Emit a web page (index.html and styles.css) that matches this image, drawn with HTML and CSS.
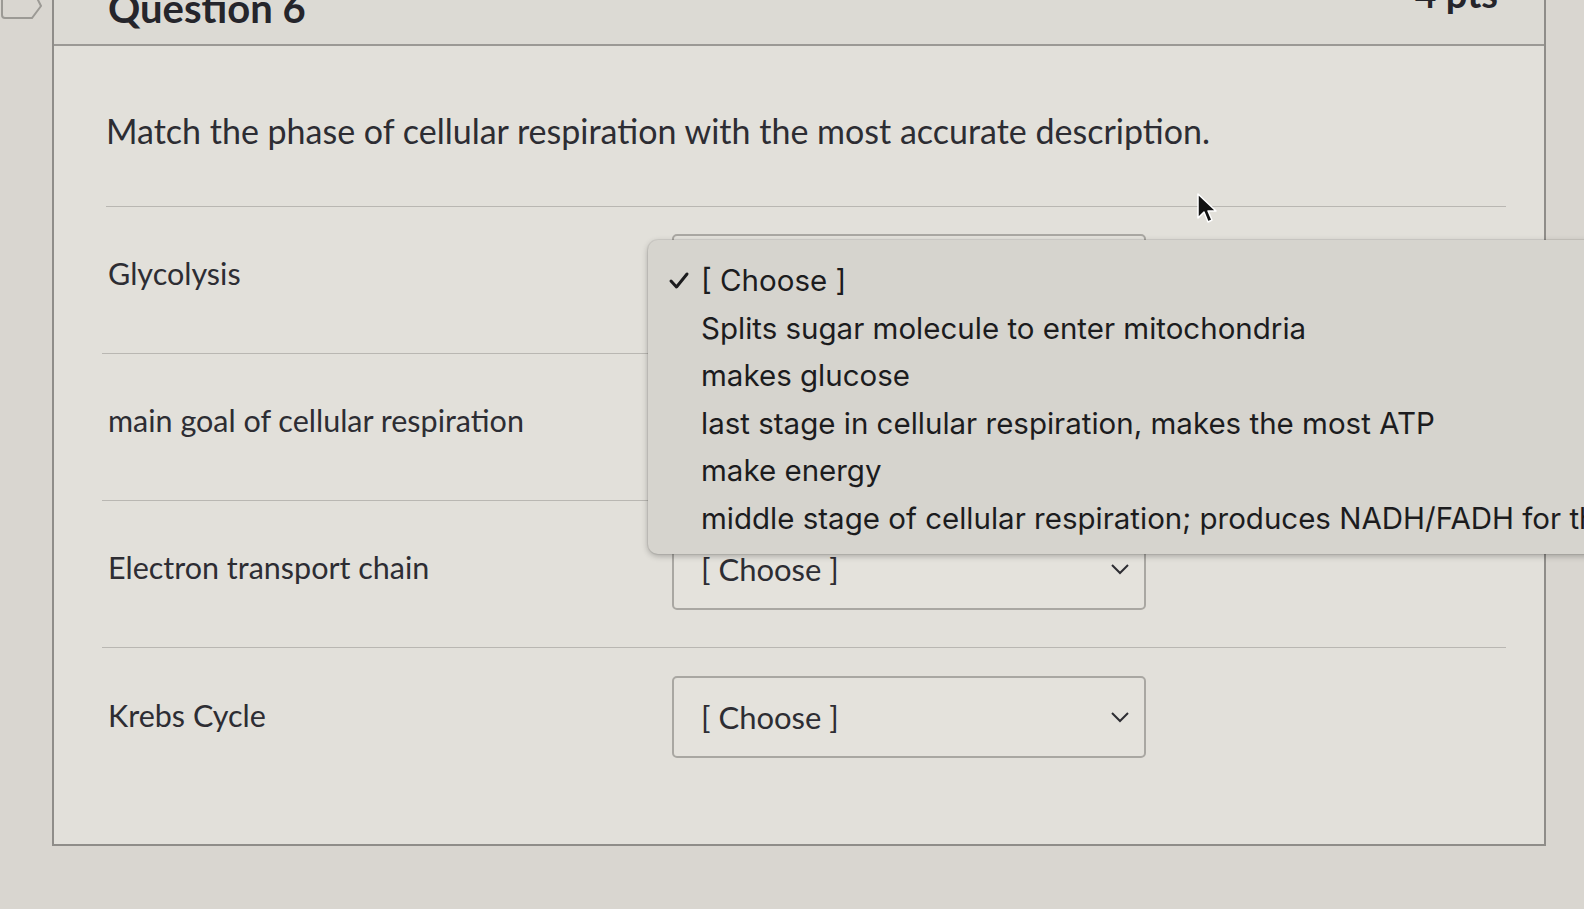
FILE: index.html
```html
<!DOCTYPE html>
<html lang="en">
<head>
<meta charset="utf-8">
<title>Question 6</title>
<link rel="stylesheet" href="styles.css">
</head>
<body>
<div class="page">
  <div class="gutter">
    <svg class="flag" width="44" height="24" viewBox="0 0 44 24"><path d="M2 -10 L2 15 Q2 18 5 18 L32 18 L41 6 L33 -10" fill="none" stroke="#9c9a95" stroke-width="2"/></svg>
  </div>
  <div class="card">
    <header class="qhead">
      <h2 class="qtitle">Question 6</h2>
      <span class="pts">4 pts</span>
    </header>
    <div class="qbody">
      <p class="qtext">Match the phase of cellular respiration with the most accurate description.</p>
      <div class="rows">
        <div class="row">
          <div class="label">Glycolysis</div>
          <div class="select"><span>[ Choose ]</span><svg class="chev" width="20" height="12" viewBox="0 0 20 12"><path d="M2 2 L10 10 L18 2" fill="none" stroke="#2d2d33" stroke-width="2"/></svg></div>
        </div>
        <div class="row">
          <div class="label">main goal of cellular respiration</div>
          <div class="select"><span>[ Choose ]</span><svg class="chev" width="20" height="12" viewBox="0 0 20 12"><path d="M2 2 L10 10 L18 2" fill="none" stroke="#2d2d33" stroke-width="2"/></svg></div>
        </div>
        <div class="row">
          <div class="label">Electron transport chain</div>
          <div class="select"><span>[ Choose ]</span><svg class="chev" width="20" height="12" viewBox="0 0 20 12"><path d="M2 2 L10 10 L18 2" fill="none" stroke="#2d2d33" stroke-width="2"/></svg></div>
        </div>
        <div class="row last">
          <div class="label">Krebs Cycle</div>
          <div class="select"><span>[ Choose ]</span><svg class="chev" width="20" height="12" viewBox="0 0 20 12"><path d="M2 2 L10 10 L18 2" fill="none" stroke="#2d2d33" stroke-width="2"/></svg></div>
        </div>
      </div>
    </div>
  </div>

  <ul class="menu">
    <li class="opt checked"><svg class="tick" width="22" height="20" viewBox="0 0 22 20"><path d="M3 10 L8.5 16 L19 3" fill="none" stroke="#1c1c1e" stroke-width="3" stroke-linecap="round" stroke-linejoin="round"/></svg>[ Choose ]</li>
    <li class="opt">Splits sugar molecule to enter mitochondria</li>
    <li class="opt">makes glucose</li>
    <li class="opt">last stage in cellular respiration, makes the most ATP</li>
    <li class="opt">make energy</li>
    <li class="opt">middle stage of cellular respiration; produces NADH/FADH for the electron transport chain</li>
  </ul>

  <svg class="cursor" width="22" height="34" viewBox="0 0 22 34"><path d="M2 2 L2 26 L8 20 L12 30 L16 28 L12 19 L20 19 Z" fill="#111" stroke="#fff" stroke-width="1.5" stroke-linejoin="round"/></svg>
</div>
</body>
</html>
```

FILE: styles.css
```css
html, body {
  margin: 0;
  padding: 0;
  width: 1584px;
  height: 909px;
  overflow: hidden;
  background: #d9d6d0;
}
.page {
  position: relative;
  display: flex;
  width: 1584px;
  height: 909px;
  font-family: Lato, "Open Sans", sans-serif;
  color: #2d2d33;
}
.gutter {
  width: 52px;
  flex: none;
}
.flag {
  display: block;
}
.card {
  width: 1494px;
  height: 846px;
  flex: none;
  background: #e2e0da;
  border-left: 2px solid #8f8d89;
  border-right: 2px solid #8f8d89;
  border-bottom: 2px solid #8f8d89;
  box-sizing: border-box;
  display: flex;
  flex-direction: column;
}
.qhead {
  height: 46px;
  flex: none;
  background: #dcdad4;
  border-bottom: 2px solid #9b9995;
  display: flex;
  justify-content: space-between;
  align-items: flex-end;
  padding: 0 46px 0 54px;
  overflow: hidden;
  box-sizing: border-box;
}
.qtitle {
  margin: 0 0 16px 0;
  font-size: 40px;
  font-weight: 700;
  line-height: 40px;
  color: #25252b;
}
.pts {
  font-size: 38px;
  font-weight: 700;
  line-height: 38px;
  margin-bottom: 32px;
  color: #25252b;
}
.qbody {
  padding: 0 38px 0 48px;
}
.qtext {
  margin: 64px 0 0 4px;
  font-size: 34px;
  line-height: 42px;
  padding-bottom: 54px;
  border-bottom: 1.5px solid #b9b7b2;
}
.rows {
  display: flex;
  flex-direction: column;
}
.row {
  display: flex;
  align-items: center;
  height: 147px;
  padding: 0 0 10px 6px;
  box-sizing: border-box;
  border-bottom: 1.5px solid #b9b7b2;
}
.row.last {
  border-bottom: none;
}
.label {
  width: 564px;
  flex: none;
  font-size: 30.5px;
  line-height: 38px;
  margin-top: -4px;
}
.select {
  width: 474px;
  height: 82px;
  box-sizing: border-box;
  border: 2px solid #a9a7a2;
  border-radius: 5px;
  background: #e4e2dc;
  display: flex;
  align-items: center;
  justify-content: space-between;
  padding: 0 14px 0 27px;
  font-size: 31px;
}
.chev {
  display: block;
}
.menu {
  position: absolute;
  left: 648px;
  top: 240px;
  width: 980px;
  margin: 0;
  padding: 17px 0 12px 0;
  list-style: none;
  background: #d6d4ce;
  border-radius: 10px;
  box-shadow: 0 2px 6px rgba(0, 0, 0, 0.28), 0 0 0 1px rgba(0, 0, 0, 0.06);
  font-family: Inter, "Liberation Sans", sans-serif;
  font-size: 29.5px;
  color: #1c1c1e;
}
.opt {
  height: 47.5px;
  line-height: 47.5px;
  padding-left: 53px;
  white-space: nowrap;
  position: relative;
}
.tick {
  position: absolute;
  left: 20px;
  top: 14px;
}
.cursor {
  position: absolute;
  left: 1196px;
  top: 192px;
}
```
